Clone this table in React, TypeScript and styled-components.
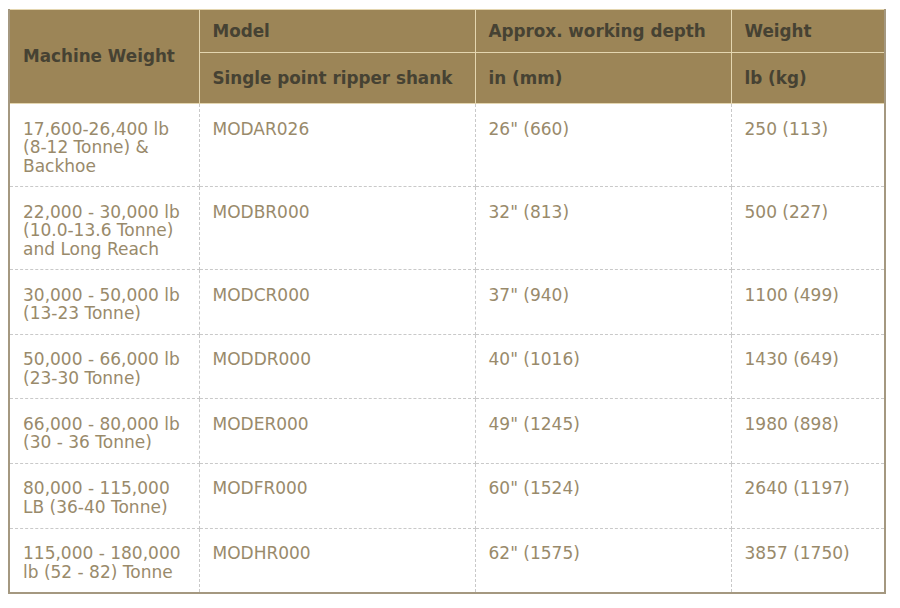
import styled, { createGlobalStyle } from "styled-components";

const GlobalStyle = createGlobalStyle`
  body {
    margin: 0;
    background: #ffffff;
    font-family: "DejaVu Sans", Verdana, sans-serif;
  }
`;

type Row = {
  weight: string[];
  model: string;
  depth: string;
  mass: string;
};

const rows: Row[] = [
  { weight: ["17,600-26,400 lb", "(8-12 Tonne) &", "Backhoe"], model: "MODAR026", depth: "26\" (660)", mass: "250 (113)" },
  { weight: ["22,000 - 30,000 lb", "(10.0-13.6 Tonne)", "and Long Reach"], model: "MODBR000", depth: "32\" (813)", mass: "500 (227)" },
  { weight: ["30,000 - 50,000 lb", "(13-23 Tonne)"], model: "MODCR000", depth: "37\" (940)", mass: "1100 (499)" },
  { weight: ["50,000 - 66,000 lb", "(23-30 Tonne)"], model: "MODDR000", depth: "40\" (1016)", mass: "1430 (649)" },
  { weight: ["66,000 - 80,000 lb", "(30 - 36 Tonne)"], model: "MODER000", depth: "49\" (1245)", mass: "1980 (898)" },
  { weight: ["80,000 - 115,000", "LB (36-40 Tonne)"], model: "MODFR000", depth: "60\" (1524)", mass: "2640 (1197)" },
  { weight: ["115,000 - 180,000", "lb (52 - 82) Tonne"], model: "MODHR000", depth: "62\" (1575)", mass: "3857 (1750)" },
];

function App() {
  return (
    <Page>
      <GlobalStyle />
      <SpecTable>
        <colgroup>
          <col style={{ width: 190 }} />
          <col style={{ width: 276 }} />
          <col style={{ width: 256 }} />
          <col style={{ width: 154 }} />
        </colgroup>
        <thead>
          <tr>
            <HeadCell rowSpan={2}>Machine Weight</HeadCell>
            <HeadCell $height={42}>Model</HeadCell>
            <HeadCell $height={42}>Approx. working depth</HeadCell>
            <HeadCell $height={42}>Weight</HeadCell>
          </tr>
          <tr>
            <HeadCell $height={50}>Single point ripper shank</HeadCell>
            <HeadCell $height={50}>in (mm)</HeadCell>
            <HeadCell $height={50}>lb (kg)</HeadCell>
          </tr>
        </thead>
        <tbody>
          {rows.map((r) => (
            <tr key={r.model}>
              <Cell>
                {r.weight.map((line) => (
                  <Line key={line}>{line}</Line>
                ))}
              </Cell>
              <Cell>{r.model}</Cell>
              <Cell>{r.depth}</Cell>
              <Cell>{r.mass}</Cell>
            </tr>
          ))}
        </tbody>
      </SpecTable>
    </Page>
  );
}

export default App;

const Page = styled.div`
  padding: 9px 0 0 8px;
`;

const SpecTable = styled.table`
  width: 876px;
  table-layout: fixed;
  border-collapse: collapse;
  border: 2px solid #a49880;
  border-top: 1px solid #d8cba8;
`;

const HeadCell = styled.th<{ $height?: number }>`
  height: ${(p) => (p.$height ? `${p.$height}px` : "auto")};
  padding: 0 13px;
  background: #9c8557;
  color: #464233;
  font-size: 16.8px;
  font-weight: bold;
  text-align: left;
  vertical-align: middle;
  border: 1px solid #e4d6b0;
  line-height: 18.5px;
  white-space: nowrap;
`;

const Cell = styled.td`
  padding: 15.5px 13px 11.1px;
  color: #998a6b;
  font-size: 17px;
  line-height: 18.5px;
  vertical-align: top;
  border: 1px dashed #c9c9c9;
`;

const Line = styled.div`
  white-space: nowrap;
`;
